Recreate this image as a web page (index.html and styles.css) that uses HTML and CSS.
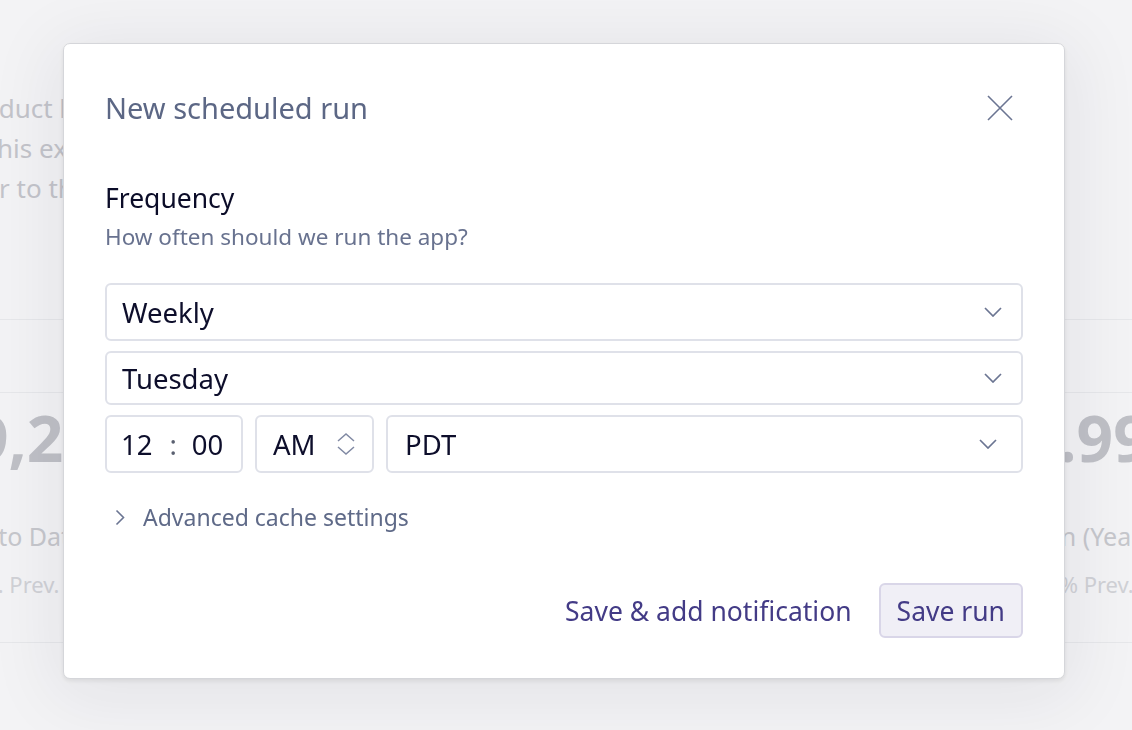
FILE: index.html
```html
<!DOCTYPE html>
<html lang="en">
<head>
  <meta charset="UTF-8" />
  <meta name="viewport" content="width=device-width, initial-scale=1.0" />
  <title>New scheduled run</title>
  <link rel="stylesheet" href="styles.css">
</head>
<body>
  <div class="page">
    <p class="intro">
      <span class="intro-line l1">Product launch metrics for the quarter</span>
      <span class="intro-line l2">In this experiment we compare cohorts</span>
      <span class="intro-line l3">over to the dashboard for details</span>
    </p>
    <div class="rule"></div>
    <div class="table-head"></div>
    <div class="stats">
      <div class="stat stat-left">
        <div class="stat-num">9,245</div>
        <div class="stat-label">Up to Date</div>
        <div class="stat-sub">vs. Prev. Month</div>
      </div>
      <div class="stat stat-right">
        <div class="stat-num">1.99%</div>
        <div class="stat-label">Gain (Year)</div>
        <div class="stat-sub">+0.9% Prev. Year</div>
      </div>
    </div>
    <div class="rule"></div>
  </div>

  <div class="overlay">
    <div class="modal">
      <div class="modal-header">
        <h2 class="modal-title">New scheduled run</h2>
        <button class="close-btn" aria-label="Close">
          <svg width="26" height="26" viewBox="0 0 26 26">
            <path d="M1 1 L25 25 M25 1 L1 25" stroke="#6b7592" stroke-width="1.6" fill="none" />
          </svg>
        </button>
      </div>

      <div class="field">
        <div class="field-label">Frequency</div>
        <div class="field-hint">How often should we run the app?</div>

        <div class="select select-tall">
          <span>Weekly</span>
          <svg class="chev" width="18" height="10" viewBox="0 0 18 10">
            <polyline points="1,1 9,9 17,1" stroke="#6b7592" stroke-width="1.7" fill="none" />
          </svg>
        </div>

        <div class="select select-short">
          <span>Tuesday</span>
          <svg class="chev" width="18" height="10" viewBox="0 0 18 10">
            <polyline points="1,1 9,9 17,1" stroke="#6b7592" stroke-width="1.7" fill="none" />
          </svg>
        </div>

        <div class="time-row">
          <div class="box time-box">
            <span>12</span>
            <span class="colon">:</span>
            <span>00</span>
          </div>
          <div class="box ampm-box">
            <span>AM</span>
            <svg width="20" height="24" viewBox="0 0 20 24">
              <polyline points="2,9 10,2 18,9" stroke="#8089a3" stroke-width="1.5" fill="none" />
              <polyline points="2,15 10,22 18,15" stroke="#8089a3" stroke-width="1.5" fill="none" />
            </svg>
          </div>
          <div class="box tz-box">
            <span>PDT</span>
            <svg class="chev" width="18" height="10" viewBox="0 0 18 10">
              <polyline points="1,1 9,9 17,1" stroke="#6b7592" stroke-width="1.7" fill="none" />
            </svg>
          </div>
        </div>

        <div class="advanced">
          <svg width="10" height="17" viewBox="0 0 10 17">
            <polyline points="1.5,1.5 8.5,8.5 1.5,15.5" stroke="#6b7592" stroke-width="1.6" fill="none" />
          </svg>
          <span>Advanced cache settings</span>
        </div>
      </div>

      <div class="modal-footer">
        <button class="link-btn">Save &amp; add notification</button>
        <button class="save-btn">Save run</button>
      </div>
    </div>
  </div>
</body>
</html>
```

FILE: styles.css
```css
body {
  font-family: "Noto Sans", "DejaVu Sans", sans-serif;
  background: #f3f3f5;
  margin: 0;
  overflow: hidden;
  height: 730px;
}

.page {
  width: 1132px;
  padding-top: 88px;
  color: #c3c4ca;
}

.intro {
  margin: 0;
  font-size: 26px;
  line-height: 40px;
  white-space: nowrap;
}

.intro-line {
  display: block;
}

.l1 { margin-left: -43px; }
.l2 { margin-left: -44px; }
.l3 { margin-left: -44px; }

.rule {
  height: 1px;
  background: #e6e7ea;
}

.intro + .rule {
  margin-top: 111px;
}

.table-head {
  height: 72px;
  border-bottom: 1px solid #e6e7ea;
}

.stats {
  display: flex;
  justify-content: space-between;
  height: 249px;
  white-space: nowrap;
}

.stat-num {
  margin-top: 10px;
  font-size: 64px;
  font-weight: 700;
  line-height: 70px;
  color: #bfc0c6;
}

.stat-label {
  margin-top: 46px;
  font-size: 25px;
  line-height: 34px;
  color: #c6c7cc;
}

.stat-sub {
  margin-top: 16px;
  font-size: 22px;
  line-height: 30px;
  color: #d0d1d6;
}

.stat-left .stat-num { margin-left: -28px; }
.stat-left .stat-label { margin-left: -42px; }
.stat-left .stat-sub { margin-left: -24px; }

.stat-right {
  width: 110px;
}

.stat-right .stat-sub { margin-left: -6px; }

.overlay {
  position: fixed;
  inset: 0;
  display: flex;
  align-items: flex-start;
  padding: 43px 0 0 63px;
}

.modal {
  width: 1002px;
  box-sizing: border-box;
  background: #fff;
  border: 1px solid #d5d6da;
  border-radius: 7px;
  padding: 46px 41px 40px;
  box-shadow: 0 2px 4px rgba(0, 0, 0, 0.08), 0 10px 70px 10px rgba(30, 30, 50, 0.07);
}

.modal-header {
  display: flex;
  justify-content: space-between;
  align-items: center;
  height: 36px;
}

.modal-title {
  margin: 0;
  font-size: 29px;
  font-weight: 400;
  line-height: 36px;
  color: #5c6785;
}

.close-btn {
  background: none;
  border: none;
  padding: 0;
  margin-right: 10px;
  display: flex;
  cursor: pointer;
}

.field {
  margin-top: 56px;
}

.field-label {
  font-size: 26.5px;
  line-height: 32px;
  color: #0b0c28;
}

.field-hint {
  margin-top: 9px;
  font-size: 22.5px;
  line-height: 28px;
  color: #68728f;
}

.select,
.box {
  box-sizing: border-box;
  display: flex;
  align-items: center;
  border: 2px solid #dfe1e9;
  border-radius: 6px;
  font-size: 27.5px;
  color: #0d0e2b;
}

.select {
  justify-content: space-between;
  padding: 0 19px 0 15px;
}

.select-tall {
  margin-top: 32px;
  height: 58px;
}

.select-short {
  margin-top: 10px;
  height: 54px;
}

.time-row {
  margin-top: 10px;
  display: flex;
  gap: 12px;
  height: 58px;
}

.time-box {
  width: 138px;
  padding-left: 14px;
}

.colon {
  margin: 0 15px 0 17px;
  color: #5a6070;
}

.ampm-box {
  width: 119px;
  padding-left: 16px;
  gap: 20px;
}

.tz-box {
  flex: 1;
  justify-content: space-between;
  padding: 0 24px 0 17px;
}

.advanced {
  margin-top: 29px;
  display: flex;
  align-items: center;
  gap: 18px;
  height: 30px;
  padding-left: 10px;
  font-size: 23px;
  color: #5f6a88;
}

.modal-footer {
  margin-top: 51px;
  display: flex;
  justify-content: flex-end;
  align-items: center;
  gap: 27px;
}

.link-btn,
.save-btn {
  font-family: inherit;
  font-size: 26.5px;
  color: #433b86;
  cursor: pointer;
}

.link-btn {
  background: none;
  border: none;
  padding: 0;
}

.save-btn {
  height: 55px;
  padding: 0 16px;
  background: #f0eff6;
  border: 2px solid #d9d6e8;
  border-radius: 6px;
}
```
